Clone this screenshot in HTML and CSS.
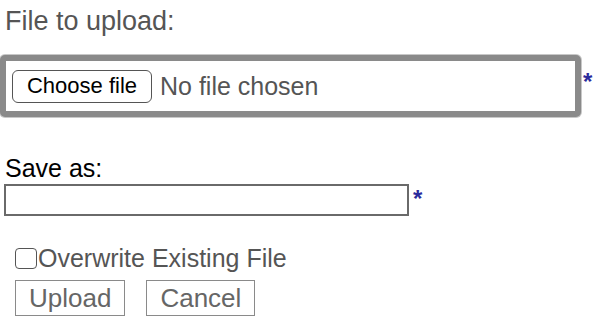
FILE: index.html
```html
<!DOCTYPE html>
<html>
<head>
<meta charset="utf-8">
<link rel="stylesheet" href="styles.css">
</head>
<body>
<div class="form">
  <div class="lbl lbl-file">File to upload:</div>
  <div class="row row-file">
    <div class="filebox">
      <button class="choose" type="button">Choose file</button>
      <span class="nofile">No file chosen</span>
    </div>
    <span class="req req-file">*</span>
  </div>
  <div class="lbl lbl-save">Save as:</div>
  <div class="row row-save">
    <div class="textinput"></div>
    <span class="req req-save">*</span>
  </div>
  <label class="check"><span class="checkbox"></span>Overwrite Existing File</label>
  <div class="buttons">
    <button class="btn" type="button">Upload</button>
    <button class="btn" type="button">Cancel</button>
  </div>
</div>
</body>
</html>
```
FILE: styles.css
```css
html, body {
  margin: 0;
  padding: 0;
  background: #fff;
}
body {
  font-family: "Liberation Sans", Arial, sans-serif;
}
.form {
  display: flex;
  flex-direction: column;
  align-items: flex-start;
}
.lbl {
  line-height: 1;
}
.lbl-file {
  font-size: 27px;
  color: #555;
  margin: 8px 0 0 5px;
}
.row {
  display: flex;
  align-items: flex-start;
}
.row-file {
  margin-top: 20px;
}
.filebox {
  box-sizing: border-box;
  width: 581px;
  height: 62px;
  border: 6px solid #8a8a8a;
  border-radius: 5px;
  box-shadow: 0 0 0 1px #c8c8c8;
  display: flex;
  align-items: center;
  padding-left: 6px;
  background: #fff;
}
.choose {
  box-sizing: border-box;
  width: 140px;
  height: 33px;
  margin: 0;
  padding: 0;
  border: 1.5px solid #555;
  border-radius: 6px;
  background: #fff;
  font-family: "Liberation Sans", Arial, sans-serif;
  font-size: 22px;
  color: #000;
}
.nofile {
  margin-left: 8px;
  font-size: 25px;
  color: #555;
}
.req {
  color: #2b2b9c;
  font-weight: bold;
  font-size: 24px;
  line-height: 1;
}
.req-file {
  margin-left: 2px;
  margin-top: 15px;
}
.lbl-save {
  font-size: 25px;
  color: #000;
  margin: 39px 0 0 5px;
}
.row-save {
  margin-top: 3px;
  margin-left: 4px;
}
.textinput {
  box-sizing: border-box;
  width: 405px;
  height: 32px;
  border: 2px solid #6a6a6a;
  background: #fff;
}
.req-save {
  margin-left: 4px;
  margin-top: 3px;
}
.check {
  display: flex;
  align-items: center;
  margin: 30px 0 0 15px;
  font-size: 25px;
  color: #555;
  line-height: 1;
}
.checkbox {
  box-sizing: border-box;
  width: 22px;
  height: 21px;
  border: 1.5px solid #555;
  border-radius: 4px;
  margin-right: 1px;
}
.buttons {
  display: flex;
  gap: 21px;
  margin: 9px 0 0 15px;
}
.btn {
  box-sizing: border-box;
  height: 36px;
  margin: 0;
  padding: 0 13px;
  border: 1.5px solid #8a8a8a;
  border-radius: 0;
  background: #fff;
  font-family: "Liberation Sans", Arial, sans-serif;
  font-size: 26px;
  color: #666;
  line-height: 1;
}
```
